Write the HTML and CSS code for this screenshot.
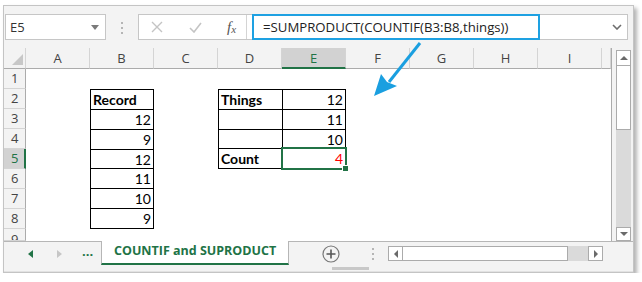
FILE: index.html
```html
<!DOCTYPE html>
<html lang="en">
  <head>
    <meta charset="UTF-8" />
    <title>COUNTIF and SUMPRODUCT</title>
    <link rel="stylesheet" href="styles.css">
  </head>
  <body>
    <div class="window">
      <div class="formula-bar">
        <div class="name-box">
          <span>E5</span>
          <svg class="caret" width="8" height="5" viewBox="0 0 8 5"><path d="M0 0h8L4 5z" fill="#7a7a7a"/></svg>
        </div>
        <div class="grip"><i></i><i></i><i></i></div>
        <div class="formula">
          <div class="fn-buttons">
            <svg width="12" height="12" viewBox="0 0 12 12"><path d="M1 1l10 10M11 1L1 11" stroke="#c4c4c4" stroke-width="1.4"/></svg>
            <svg width="13" height="11" viewBox="0 0 13 11"><path d="M1 6l4 4 7-9" stroke="#c4c4c4" stroke-width="1.6" fill="none"/></svg>
            <span class="fx">f<sub>x</sub></span>
          </div>
          <div class="formula-text">=SUMPRODUCT(COUNTIF(B3:B8,things))</div>
          <svg class="chevron" width="10" height="6" viewBox="0 0 10 6"><path d="M1 1l4 4 4-4" stroke="#6d6d6d" stroke-width="1.6" fill="none"/></svg>
        </div>
      </div>

      <div class="sheet-area">
        <div class="sheet">
          <div class="corner"><svg width="11" height="11" viewBox="0 0 11 11"><path d="M11 0v11H0z" fill="#c7c7c7"/></svg></div>
          <div class="col-head">A</div>
          <div class="col-head">B</div>
          <div class="col-head">C</div>
          <div class="col-head">D</div>
          <div class="col-head active">E</div>
          <div class="col-head">F</div>
          <div class="col-head">G</div>
          <div class="col-head">H</div>
          <div class="col-head">I</div>
          <div class="col-head"></div>

          <div class="row-head">1</div>
          <div class="row-head">2</div>
          <div class="row-head">3</div>
          <div class="row-head">4</div>
          <div class="row-head active">5</div>
          <div class="row-head">6</div>
          <div class="row-head">7</div>
          <div class="row-head">8</div>
          <div class="row-head last">9</div>

          <div class="record">
            <div class="cell bold">Record</div>
            <div class="cell num">12</div>
            <div class="cell num">9</div>
            <div class="cell num">12</div>
            <div class="cell num">11</div>
            <div class="cell num">10</div>
            <div class="cell num">9</div>
          </div>

          <div class="things">
            <div class="cell bold">Things</div>
            <div class="cell num">12</div>
            <div class="cell"></div>
            <div class="cell num">11</div>
            <div class="cell"></div>
            <div class="cell num">10</div>
            <div class="cell bold">Count</div>
            <div class="cell num selected">4</div>
          </div>
        </div>

        <div class="vscroll">
          <div class="sb-btn"><svg width="8" height="4" viewBox="0 0 8 4"><path d="M0 4h8L4 0z" fill="#6a6a6a"/></svg></div>
          <div class="sb-thumb"></div>
          <div class="sb-track"></div>
          <div class="sb-btn down"><svg width="8" height="4" viewBox="0 0 8 4"><path d="M0 0h8L4 4z" fill="#6a6a6a"/></svg></div>
        </div>
      </div>

      <div class="tabs">
        <svg class="nav" width="5" height="8" viewBox="0 0 5 8"><path d="M5 0v8L0 4z" fill="#217346"/></svg>
        <svg class="nav off" width="5" height="8" viewBox="0 0 5 8"><path d="M0 0v8l5-4z" fill="#c6c6c6"/></svg>
        <span class="more">...</span>
        <div class="tab">COUNTIF and SUPRODUCT</div>
        <svg class="add" width="18" height="18" viewBox="0 0 18 18"><circle cx="9" cy="9" r="8" fill="none" stroke="#777" stroke-width="1.2"/><path d="M9 4.5v9M4.5 9h9" stroke="#555" stroke-width="1.6"/></svg>
        <div class="grip"><i></i><i></i><i></i></div>
        <div class="hscroll">
          <div class="sb-btn"><svg width="4" height="8" viewBox="0 0 4 8"><path d="M4 0v8L0 4z" fill="#6a6a6a"/></svg></div>
          <div class="sb-thumb"></div>
          <div class="sb-track"></div>
          <div class="sb-btn"><svg width="4" height="8" viewBox="0 0 4 8"><path d="M0 0v8l4-4z" fill="#6a6a6a"/></svg></div>
        </div>
      </div>

      <div class="status"><span></span></div>

      <svg class="arrow" width="60" height="60" viewBox="0 0 60 60">
        <path d="M50 2L19 41" stroke="#1a9fe0" stroke-width="3"/>
        <path d="M4 55l7-22 6 8 10 4z" fill="#1a9fe0"/>
      </svg>
    </div>
  </body>
</html>
```

FILE: styles.css
```css
* {
  box-sizing: border-box;
}

body {
  margin: 0;
  background-color: white;
  font-family: "Open Sans", sans-serif;
  color: #444;
}

.window {
  position: relative;
  display: flex;
  flex-direction: column;
  width: 631px;
  height: 268px;
  margin: 5px 0 0 3px;
  border: 1px solid #c4c4c4;
  background-color: #f3f3f3;
  box-shadow: 3px 3px 4px rgba(0, 0, 0, 0.3);
}

/* formula bar */

.formula-bar {
  display: flex;
  align-items: flex-start;
  height: 42px;
  padding: 8px 0 0 1px;
}

.name-box {
  display: flex;
  align-items: center;
  justify-content: space-between;
  width: 101px;
  height: 26px;
  padding: 0 6px 0 4px;
  border: 1px solid #c6c6c6;
  background-color: white;
  font-size: 13px;
  color: #333;
}

.grip {
  display: flex;
  flex-direction: column;
  gap: 3px;
  width: 2px;
  margin: 8px 15px 0 15px;
}

.grip i {
  width: 2px;
  height: 2px;
  background-color: #b5b5b5;
}

.formula {
  display: flex;
  align-items: center;
  width: 490px;
  height: 26px;
  border: 1px solid #c6c6c6;
  background-color: white;
}

.fn-buttons {
  display: flex;
  align-items: center;
  width: 108px;
  height: 100%;
  padding-left: 12px;
  border-right: 1px solid #d4d4d4;
}

.fn-buttons svg + svg {
  margin-left: 26px;
}

.fx {
  margin-left: 25px;
  font-family: "Liberation Serif", serif;
  font-style: italic;
  font-size: 15px;
  color: #555;
}

.fx sub {
  font-size: 11px;
  vertical-align: -1px;
}

.formula-text {
  width: 288px;
  height: 26px;
  margin: -1px 0 -1px 5px;
  padding: 2px 0 0 9px;
  border: 2px solid #1ea1e2;
  font-size: 13.2px;
  color: #222;
  white-space: nowrap;
}

.chevron {
  margin-left: auto;
  margin-right: 5px;
}

/* sheet */

.sheet-area {
  display: flex;
  height: 193px;
}

.sheet {
  display: grid;
  grid-template-columns: 22px repeat(9, 64px) 1fr;
  grid-template-rows: 21px repeat(8, 20px) 1fr;
  width: 608px;
  border-right: 1px solid #ababab;
  background-color: white;
  overflow: hidden;
}

.corner,
.col-head,
.row-head {
  background-color: #f3f3f3;
  border-right: 1px solid #d4d4d4;
  border-bottom: 1px solid #ababab;
  font-size: 13px;
  color: #444;
}

.corner {
  display: flex;
  align-items: flex-end;
  justify-content: flex-end;
  padding: 0 2px 3px 0;
}

.col-head {
  display: flex;
  align-items: center;
  justify-content: center;
}

.row-head {
  grid-column: 1;
  padding-left: 7px;
  line-height: 19px;
  border-right: 1px solid #ababab;
  border-bottom-color: #d4d4d4;
}

.row-head.last {
  line-height: 14px;
  padding-top: 3px;
  overflow: hidden;
}

.col-head.active {
  background-color: #d2d2d2;
  border-bottom: 2px solid #217346;
  color: #217346;
}

.row-head.active {
  background-color: #d2d2d2;
  border-right: 2px solid #217346;
  color: #217346;
}

.record,
.things {
  display: grid;
  gap: 1px;
  border: 1px solid black;
  background-color: black;
  font-family: Lato, sans-serif;
  font-size: 14px;
  color: black;
}

.record {
  grid-column: 3;
  grid-row: 3 / span 7;
  grid-template-rows: repeat(7, minmax(0, 1fr));
}

.things {
  grid-column: 5 / span 2;
  grid-row: 3 / span 4;
  grid-template-columns: 1fr 1fr;
  grid-template-rows: repeat(4, minmax(0, 1fr));
}

.cell {
  position: relative;
  padding: 1px 2px 0;
  line-height: 18px;
  background-color: white;
}

.bold {
  font-weight: bold;
}

.num {
  text-align: right;
}

.selected {
  color: #ff0000;
  outline: 2px solid #217346;
  outline-offset: 0;
}

.selected::after {
  content: "";
  position: absolute;
  right: -4px;
  bottom: -4px;
  width: 5px;
  height: 5px;
  border: 1px solid white;
  background-color: #217346;
}

/* scroll bars */

.vscroll {
  display: flex;
  flex-direction: column;
  width: 15px;
  margin: 2px 0 0 4px;
}

.sb-btn {
  display: flex;
  align-items: center;
  justify-content: center;
  flex: none;
  width: 15px;
  height: 16px;
  border: 1px solid #ababab;
  background-color: white;
}

.vscroll .sb-thumb {
  height: 64px;
  border: 1px solid #ababab;
  border-top: 0;
  background-color: white;
}

.sb-track {
  flex: 1;
  background-color: #dadada;
}

.vscroll .down {
  height: 14px;
}

/* sheet tabs */

.tabs {
  display: flex;
  align-items: center;
  height: 24px;
  border-top: 1px solid #b6b6b6;
}

.nav {
  margin-left: 24px;
}

.nav.off {
  margin-left: 24px;
}

.more {
  margin: -6px 0 0 20px;
  font-weight: bold;
  font-size: 13px;
  color: #217346;
}

.tab {
  align-self: stretch;
  width: 188px;
  margin: -1px 0 0 8px;
  padding-top: 1px;
  border-left: 1px solid #b6b6b6;
  border-right: 1px solid #b6b6b6;
  border-bottom: 2px solid #217346;
  background-color: white;
  text-align: center;
  font-weight: bold;
  font-size: 12.5px;
  color: #217346;
}

.add {
  margin-left: 33px;
}

.tabs .grip {
  margin: 0 14px 0 32px;
}

.hscroll {
  display: flex;
  width: 215px;
  height: 15px;
}

.hscroll .sb-btn {
  width: 15px;
  height: 15px;
}

.hscroll .sb-thumb {
  width: 165px;
  border: 1px solid #ababab;
  border-left: 0;
  background-color: white;
}

.status {
  flex: 1;
  padding-top: 2px;
  border-bottom: 1px solid #e2e2e2;
}

.status span {
  display: block;
  width: 37px;
  height: 3px;
  margin-left: 328px;
  background-color: #c8c8c8;
}

/* callout arrow over the sheet */

.arrow {
  position: absolute;
  left: 366px;
  top: 35px;
}
```
